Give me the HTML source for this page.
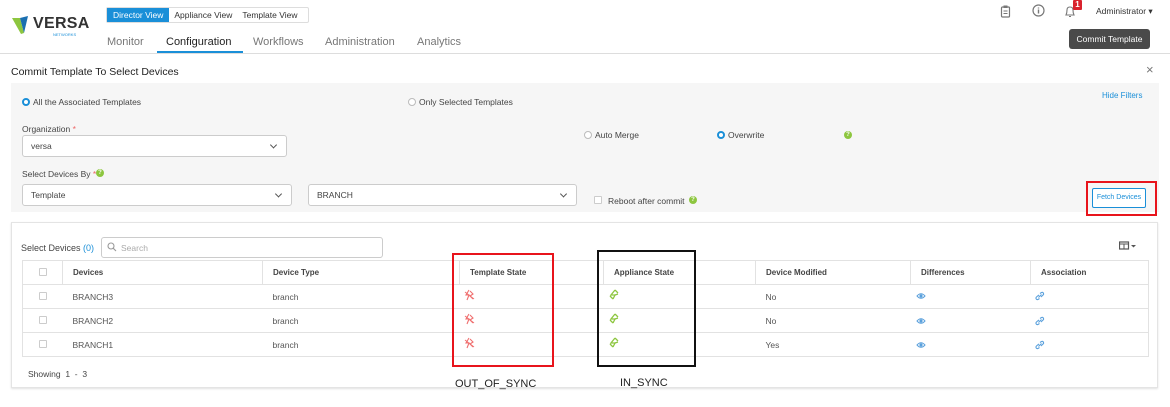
<!DOCTYPE html>
<html><head><style>
*{box-sizing:border-box;margin:0;padding:0}
body{width:1170px;height:407px;background:#fff;font-family:"Liberation Sans",sans-serif;position:relative;overflow:hidden;color:#333}
.sel{position:absolute;background:#fff;border:1px solid #ccc;border-radius:3px;font-size:8.5px;color:#444;padding:0 8px;display:flex;align-items:center}
.sel:after{content:"";position:absolute;right:10px;top:50%;width:4px;height:4px;border-right:1.3px solid #555;border-bottom:1.3px solid #555;transform:translateY(-70%) rotate(45deg)}
.radio{display:inline-block;width:8px;height:8px;border-radius:50%;border:1px solid #bbb;background:#fff;vertical-align:-1px;margin-right:3px}
.radio.on{border:2.5px solid #1a8fd8}
.q{width:8px;height:8px;border-radius:50%;background:#8dc63f;color:#fff;font-size:6px;text-align:center;line-height:8px;font-weight:bold}
.cb{display:inline-block;width:8px;height:8px;border:1px solid #ccc;border-radius:1px;background:#fff}
.a{position:absolute;white-space:nowrap}
.s{font-size:8.5px;color:#444}
table{position:absolute;left:22px;top:260px;width:1127px;border-collapse:collapse;font-size:8.5px;border:1px solid #e2e2e2}
td,th{border-bottom:1px solid #e2e2e2;height:24px;text-align:left;padding-left:10px;color:#555;font-weight:normal}
th{font-weight:bold;color:#444;border-left:1px solid #e2e2e2;font-size:8px}
th:first-child{border-left:none}
</style></head><body>
<svg class="a" style="left:12px;top:15px" width="20" height="20" viewBox="0 0 20 20"><path d="M0 3 L8 3 L12 18 L9 19 Z" fill="#8dc63f"/><path d="M8 3 L16 1 L12 18 Z" fill="#1a6fb0"/></svg>
<div class="a" style="left:33px;top:15px;font-size:16px;font-weight:bold;color:#333;letter-spacing:0.3px">VERSA</div>
<div class="a" style="left:53px;top:32px;font-size:4px;color:#1a8fd8">NETWORKS</div>
<div class="a" style="left:106px;top:7px;height:16px;width:203px;border:1px solid #ddd;border-radius:2px;font-size:8.5px;display:flex">
<div style="background:#1a8fd8;color:#fff;padding:0 6px;line-height:14px">Director View</div>
<div style="padding:0 5px;line-height:14px">Appliance View</div>
<div style="padding:0 5px;line-height:14px">Template View</div></div>
<div class="a" style="left:107px;top:36px;font-size:11px;color:#777">Monitor</div>
<div class="a" style="left:166px;top:36px;font-size:11px;color:#222">Configuration</div>
<div class="a" style="left:157px;top:51px;width:86px;height:2px;background:#1a8fd8"></div>
<div class="a" style="left:253px;top:36px;font-size:11px;color:#777">Workflows</div>
<div class="a" style="left:325px;top:36px;font-size:11px;color:#777">Administration</div>
<div class="a" style="left:417px;top:36px;font-size:11px;color:#777">Analytics</div>
<div class="a" style="left:0;top:53px;width:1170px;height:1px;background:#ddd"></div>
<svg class="a" style="left:1000px;top:5px" width="12" height="13"><rect x="1.5" y="2" width="8" height="10" rx="1" fill="none" stroke="#777" stroke-width="1.2"/><rect x="3.5" y="0.5" width="4" height="2.5" fill="#777"/><path d="M3.5 6h4M3.5 8.5h4" stroke="#777"/></svg>
<svg class="a" style="left:1032px;top:4px" width="13" height="13"><circle cx="6.5" cy="6.5" r="5.5" fill="none" stroke="#777" stroke-width="1.2"/><path d="M6.5 5.5v4M6.5 3.5v1" stroke="#777" stroke-width="1.4"/></svg>
<svg class="a" style="left:1064px;top:5px" width="12" height="13"><path d="M2 10 Q3 8 3 5 Q3 2 6 2 Q9 2 9 5 Q9 8 10 10 Z M5 11.5h2" fill="none" stroke="#777" stroke-width="1.1"/></svg>
<div class="a" style="left:1073px;top:0px;width:9px;height:10px;background:#d9232d;color:#fff;font-size:8px;font-weight:bold;text-align:center;line-height:10px;border-radius:1px">1</div>
<div class="a" style="left:1096px;top:6px;font-size:8.5px;color:#333">Administrator ▾</div>
<div class="a" style="left:1069px;top:29px;width:81px;height:20px;background:#4a4a4a;border-radius:3px;color:#fff;font-size:8.5px;text-align:center;line-height:20px">Commit Template</div>
<div class="a" style="left:11px;top:66px;font-size:10.5px;color:#222">Commit Template To Select Devices</div>
<div class="a" style="left:1146px;top:62px;font-size:13px;color:#777">×</div>
<div class="a" style="left:11px;top:83px;width:1148px;height:129px;background:#f6f6f6"></div>
<div class="a s" style="left:22px;top:97px"><span class="radio on"></span>All the Associated Templates</div>
<div class="a s" style="left:408px;top:97px"><span class="radio"></span>Only Selected Templates</div>
<div class="a" style="left:1102px;top:91px;font-size:8px;color:#1a8fd8">Hide Filters</div>
<div class="a s" style="left:22px;top:124px">Organization <span style="color:#e66">*</span></div>
<div class="sel" style="left:22px;top:135px;width:265px;height:22px">versa</div>
<div class="a s" style="left:584px;top:130px"><span class="radio"></span>Auto Merge</div>
<div class="a s" style="left:717px;top:130px"><span class="radio on"></span>Overwrite</div>
<div class="q a" style="left:844px;top:131px">?</div>
<div class="a s" style="left:22px;top:169px">Select Devices By <span style="color:#e66">*</span></div>
<div class="q a" style="left:96px;top:169px">?</div>
<div class="sel" style="left:22px;top:184px;width:270px;height:22px">Template</div>
<div class="sel" style="left:308px;top:184px;width:269px;height:22px">BRANCH</div>
<div class="a" style="left:594px;top:196px;line-height:0"><span class="cb"></span></div>
<div class="a s" style="left:608px;top:196px">Reboot after commit</div>
<div class="q a" style="left:689px;top:196px">?</div>
<div class="a" style="left:1092px;top:188px;width:54px;height:20px;border:1px solid #1a8fd8;border-radius:2px;background:#fff;color:#1a8fd8;font-size:7px;text-align:center;line-height:18px">Fetch Devices</div>
<div class="a" style="left:1086px;top:181px;width:71px;height:35px;border:2px solid #e8141c"></div>
<div class="a" style="left:11px;top:222px;width:1147px;height:166px;border:1px solid #e4e4e4;box-shadow:0 1px 2px rgba(0,0,0,.12)"></div>
<div class="a" style="left:21px;top:243px;font-size:9px;color:#444">Select Devices <span style="color:#1a8fd8">(0)</span></div>
<div class="a" style="left:101px;top:237px;width:282px;height:21px;border:1px solid #ccc;border-radius:3px;font-size:8.5px;color:#aaa;padding:5px 0 0 19px">Search</div>
<svg class="a" style="left:107px;top:242px" width="10" height="10"><circle cx="4" cy="4" r="3" fill="none" stroke="#999" stroke-width="1.1"/><path d="M6.3 6.3L9 9" stroke="#999" stroke-width="1.1"/></svg>
<svg class="a" style="left:1119px;top:241px" width="18" height="10"><rect x="0.5" y="1" width="9" height="7" fill="none" stroke="#555" stroke-width="1.2"/><path d="M0.5 3h9M5 3v5" stroke="#555"/><path d="M12 4h5l-2.5 2.5z" fill="#555"/></svg>
<table>
<tr><th style="width:40px;text-align:center;padding:0"><span class="cb"></span></th><th style="width:200px">Devices</th><th style="width:197px">Device Type</th><th style="width:144px">Template State</th><th style="width:152px">Appliance State</th><th style="width:155px">Device Modified</th><th style="width:120px">Differences</th><th>Association</th></tr>
<tr><td style="text-align:center;padding:0"><span class="cb"></span></td><td>BRANCH3</td><td>branch</td><td></td><td></td><td>No</td><td></td><td></td></tr>
<tr><td style="text-align:center;padding:0"><span class="cb"></span></td><td>BRANCH2</td><td>branch</td><td></td><td></td><td>No</td><td></td><td></td></tr>
<tr><td style="text-align:center;padding:0"><span class="cb"></span></td><td>BRANCH1</td><td>branch</td><td></td><td></td><td>Yes</td><td></td><td></td></tr>
</table>
<svg class="a" style="left:0;top:0" width="1170" height="407">
<defs>
<g id="x"><path d="M4 0 L1 5 L4 5 L2 10 M5 1 L8 4 L5 6 L8 9" fill="none" stroke="#f07070" stroke-width="1.1"/><path d="M0 2 L9 9" stroke="#f07070" stroke-width="1"/></g>
<g id="y"><path d="M5 0 L1 5 L5 5 L3 9 M5 0 L8 3 M3 9 L0 6" fill="none" stroke="#8dc63f" stroke-width="1.3"/><path d="M5 5 L8 4" stroke="#8dc63f" stroke-width="1.3"/></g>
<g id="e"><path d="M0 4 Q4 -0.5 8 4 Q4 8.5 0 4 Z" fill="none" stroke="#5aa0dc" stroke-width="1"/><circle cx="4" cy="4" r="1.6" fill="#5aa0dc"/></g>
<g id="l"><path d="M4 1.5 L5.5 0.5 Q7 0 7.5 1.5 Q8 2.5 6.5 3.5 L5 5 M3.5 6.5 L2 7.5 Q0.5 8 0 6.5 Q-0.3 5.5 1 4.5 L3 3 M2.5 5.5 L5.5 2.5" fill="none" stroke="#5aa0dc" stroke-width="1.1"/></g>
</defs>
<use href="#x" x="465" y="290"/><use href="#x" x="465" y="314"/><use href="#x" x="465" y="338"/>
<use href="#y" x="610" y="290"/><use href="#y" x="610" y="314"/><use href="#y" x="610" y="338"/>
<use href="#e" x="917" y="292"/><use href="#e" x="917" y="317"/><use href="#e" x="917" y="341"/>
<use href="#l" x="1036" y="292"/><use href="#l" x="1036" y="317"/><use href="#l" x="1036" y="341"/>
</svg>
<div class="a" style="left:28px;top:369px;font-size:8.5px;color:#444">Showing &nbsp;1 &nbsp;- &nbsp;3</div>
<div class="a" style="left:452px;top:253px;width:102px;height:114px;border:2.5px solid #e8141c"></div>
<div class="a" style="left:597px;top:250px;width:99px;height:117px;border:2.5px solid #111"></div>
<div class="a" style="left:455px;top:378px;font-size:11px;color:#222">OUT_OF_SYNC</div>
<div class="a" style="left:620px;top:377px;font-size:11px;color:#222">IN_SYNC</div>
</body></html>
